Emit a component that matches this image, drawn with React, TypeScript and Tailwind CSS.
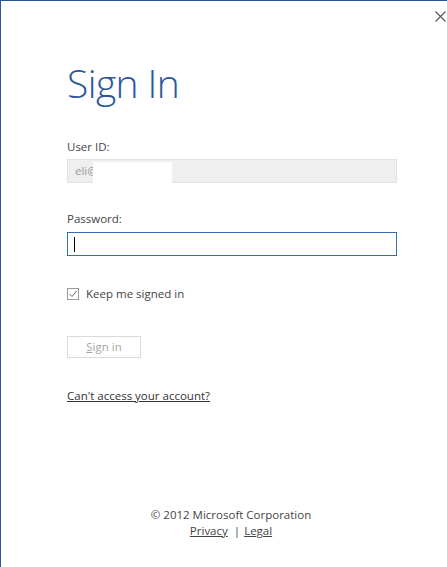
import React from "react";

const CloseIcon: React.FC = () => (
  <svg width="11" height="11" viewBox="0 0 11 11" className="block">
    <path d="M0.5 0.5 L10.5 10.5 M10.5 0.5 L0.5 10.5" stroke="#555" strokeWidth="1.1" />
  </svg>
);

const App: React.FC = () => {
  return (
    <div className="relative flex h-[567px] w-[447px] flex-col border-l border-t border-[#2b579a] bg-white font-['Open_Sans',sans-serif] text-[11.5px] text-[#333]">
      {/* window close */}
      <button className="absolute right-[1px] top-[10px]">
        <CloseIcon />
      </button>

      <div className="flex flex-col items-start pl-[66px] pt-[62px]">
        <h1 className="text-[39px] font-light leading-[40px] tracking-[-0.6px] text-[#2b579a]">Sign In</h1>

        <label className="mt-[36px] leading-[16px] text-[#444]">User ID:</label>
        <div className="mt-[4px] flex h-[24px] w-[330px] items-stretch border border-[#e3e3e3] bg-[#efefef]">
          <span className="w-[25px] self-center pl-[7px] leading-[16px] text-[#999]">eli@</span>
          <span className="-mb-px mt-[2px] w-[79px] bg-white" />
        </div>

        <label className="mt-[28px] leading-[16px] text-[#444]">Password:</label>
        <div className="mt-[5px] flex h-[24px] w-[330px] items-center border border-[#3c6cb4] bg-white pl-[6px]">
          <span className="h-[15px] w-px bg-black" />
        </div>

        <div className="mt-[30px] flex h-[16px] items-center">
          <span className="flex h-[12px] w-[12px] items-center justify-center border border-[#9a9a9a] bg-white">
            <svg width="10" height="10" viewBox="0 0 10 10">
              <path d="M1.5 5 L4 7.5 L8.5 2" fill="none" stroke="#666" strokeWidth="1" />
            </svg>
          </span>
          <span className="ml-[7px] leading-[16px] text-[#444]">Keep me signed in</span>
        </div>

        <button className="mt-[34px] flex h-[22px] w-[74px] items-center justify-center border border-[#dadada] bg-white leading-[16px] text-[#a6a6a6]">
          <span>
            <span className="underline">S</span>ign in
          </span>
        </button>

        <a className="mt-[30px] leading-[16px] text-[#333] underline">Can't access your account?</a>
      </div>

      <footer className="mt-auto mb-[28px] flex flex-col items-center pl-[14px] leading-[16px] text-[#444]">
        <span>© 2012 Microsoft Corporation</span>
        <span>
          <a className="underline">Privacy</a>
          <span className="ml-[6px] mr-[4px]">|</span>
          <a className="underline">Legal</a>
        </span>
      </footer>
    </div>
  );
};

export default App;
